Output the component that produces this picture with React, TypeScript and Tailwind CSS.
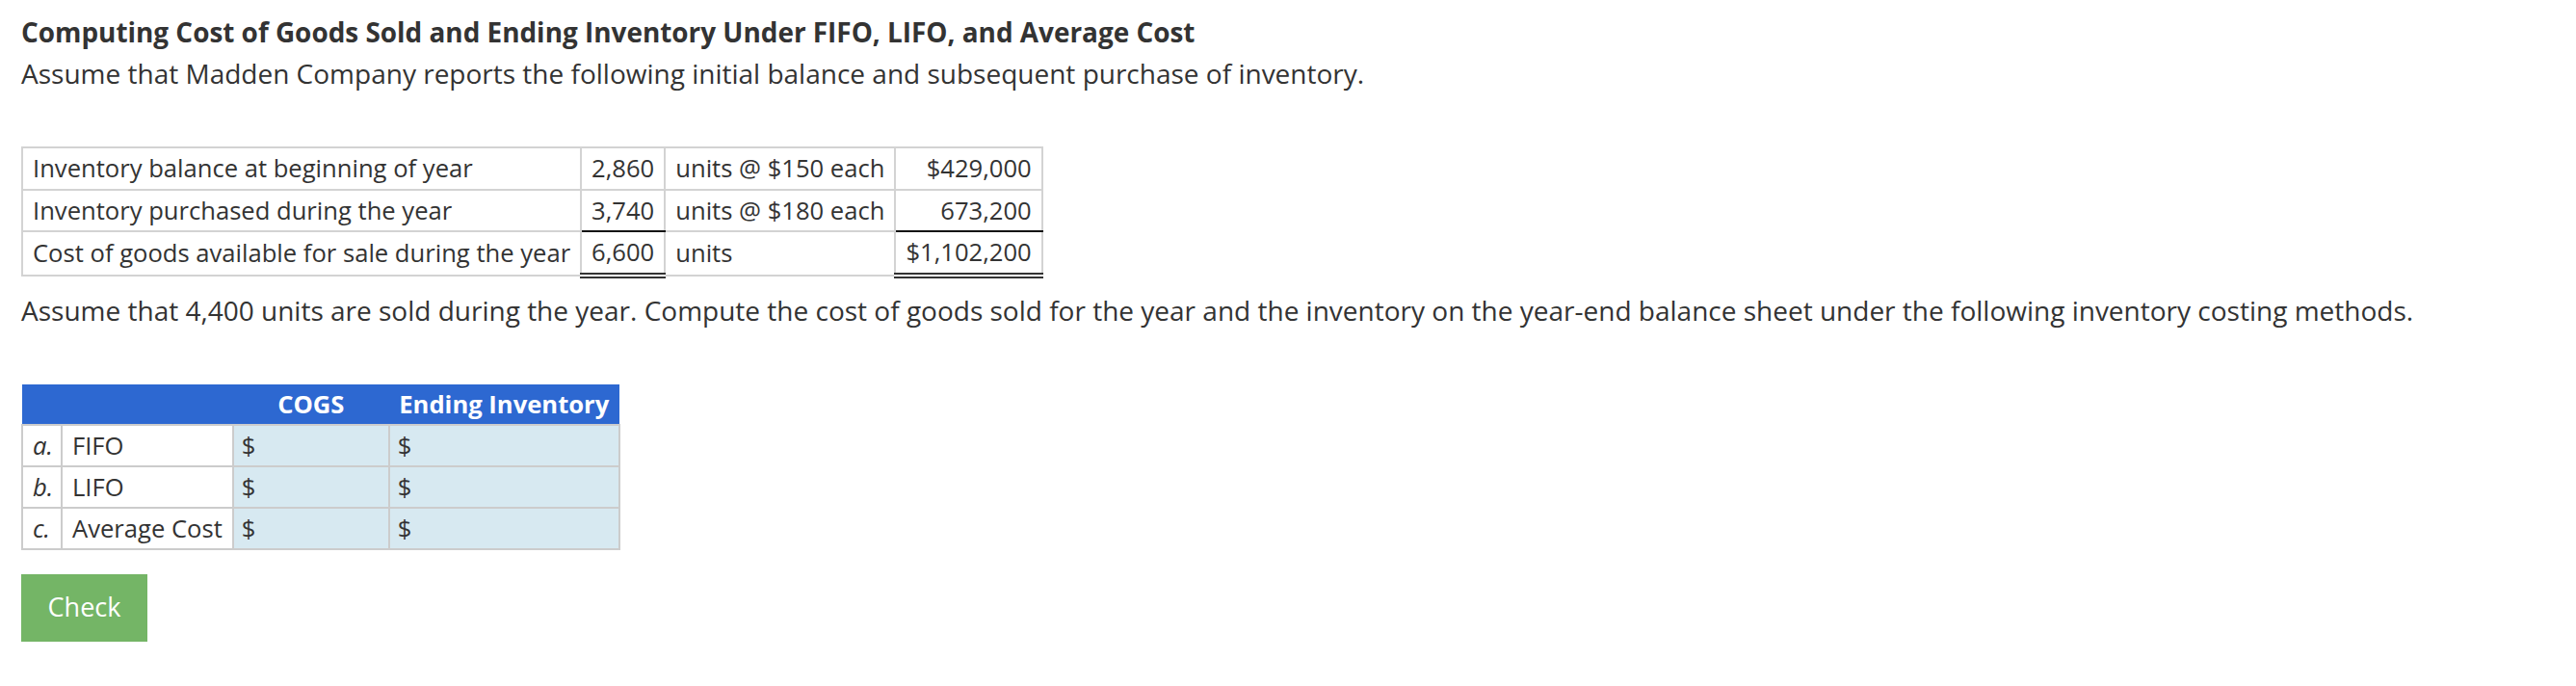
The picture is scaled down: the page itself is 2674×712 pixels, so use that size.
import React from 'react';

const rows1 = [
  { label: 'Inventory balance at beginning of year', qty: '2,860', desc: 'units @ $150 each', amt: '$429,000' },
  { label: 'Inventory purchased during the year', qty: '3,740', desc: 'units @ $180 each', amt: '673,200' },
  { label: 'Cost of goods available for sale during the year', qty: '6,600', desc: 'units', amt: '$1,102,200' },
];

const rows2 = [
  { key: 'a.', label: 'FIFO' },
  { key: 'b.', label: 'LIFO' },
  { key: 'c.', label: 'Average Cost' },
];

// total cells get a single rule under the purchase row and a double rule at the end
const numCell = (i: number) =>
  i === 1
    ? 'border-2 border-[#d3d3d3] border-b-2 border-b-[#111111] px-[10px] py-0 text-right'
    : i === 2
    ? 'border-2 border-[#d3d3d3] border-b-[6px] border-b-[#333333] [border-bottom-style:double] px-[10px] py-0 text-right'
    : 'border-2 border-[#d3d3d3] px-[10px] py-0 text-right';

const App: React.FC = () => {
  return (
    <div className="min-h-[712px] bg-white pl-[22px] pt-[12px] font-['Open_Sans',sans-serif] text-[#333333]">
      {/* Heading */}
      <div className="text-[27.9px] font-bold leading-[43px]">
        Computing Cost of Goods Sold and Ending Inventory Under FIFO, LIFO, and Average Cost
      </div>
      <div className="text-[28px] leading-[43px]">
        Assume that Madden Company reports the following initial balance and subsequent purchase of inventory.
      </div>

      {/* Given data */}
      <table className="mt-[54px] border-collapse text-[25.6px] leading-[41.5px]">
        <tbody>
          {rows1.map((r, i) => (
            <tr key={r.label}>
              <td className="border-2 border-[#d3d3d3] px-[10px] py-0">{r.label}</td>
              <td className={numCell(i)}>{r.qty}</td>
              <td className="border-2 border-[#d3d3d3] px-[10px] py-0">{r.desc}</td>
              <td className={numCell(i)}>{r.amt}</td>
            </tr>
          ))}
        </tbody>
      </table>

      <div className="mt-[12px] text-[28px] leading-[43px]">
        Assume that 4,400 units are sold during the year. Compute the cost of goods sold for the year and the inventory on the year-end balance sheet under the following inventory costing methods.
      </div>

      {/* Answer table */}
      <table className="mt-[55px] border-collapse text-[25.6px] leading-[41px]">
        <thead>
          <tr className="bg-[#2d68d1] text-white">
            <th className="h-[42px] p-0" colSpan={2}></th>
            <th className="h-[42px] w-[162px] p-0 text-center font-bold">COGS</th>
            <th className="h-[42px] w-[239px] p-0 text-center font-bold">Ending Inventory</th>
          </tr>
        </thead>
        <tbody>
          {rows2.map((r) => (
            <tr key={r.key}>
              <td className="w-[41px] border-2 border-[#cccccc] pl-[10px] pr-[6px] py-0 italic">{r.key}</td>
              <td className="border-2 border-[#cccccc] px-[10px] py-0">{r.label}</td>
              <td className="border-2 border-[#cccccc] bg-[#d7e9f1] pl-[8px] py-0">$</td>
              <td className="border-2 border-[#cccccc] bg-[#d7e9f1] pl-[8px] py-0">$</td>
            </tr>
          ))}
        </tbody>
      </table>

      <button className="mt-[25px] flex h-[70px] w-[131px] items-center justify-center bg-[#74b566] text-[27px] text-white">
        Check
      </button>
    </div>
  );
};

export default App;
